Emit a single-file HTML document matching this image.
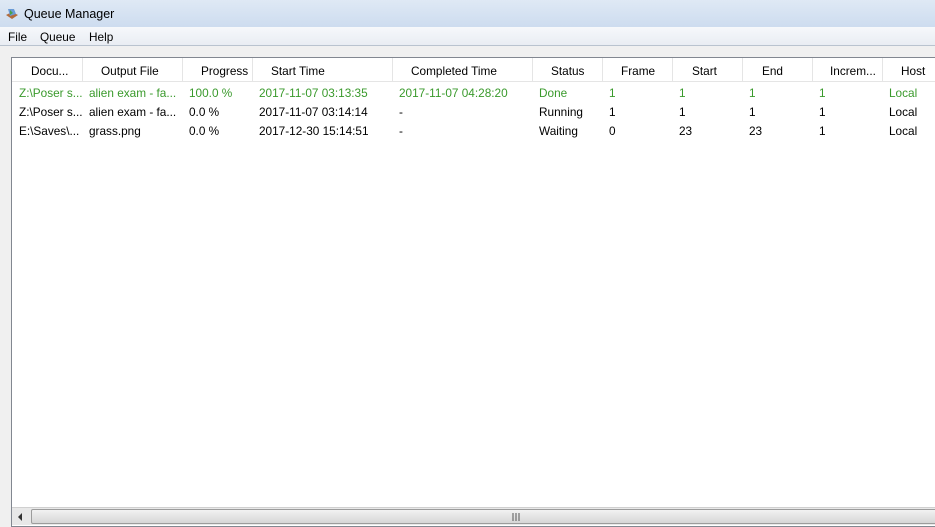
<!DOCTYPE html>
<html><head><style>
*{margin:0;padding:0;box-sizing:border-box}
body{width:935px;height:526px;overflow:hidden;background:#f0f0f0;font-family:"Liberation Sans",sans-serif;font-size:11.8px;color:#000;position:relative}
.t{position:absolute;white-space:nowrap}
#title{position:absolute;left:0;top:0;width:935px;height:27px;background:linear-gradient(#dfe9f5,#cddcef)}
#menu{position:absolute;left:0;top:27px;width:935px;height:19px;background:linear-gradient(#f6f8fb,#e9edf3);border-bottom:1px solid #b9c3cf}
#list{position:absolute;left:11px;top:57px;width:930px;height:470px;background:#fff;border:1px solid #828790}
#hdr{position:absolute;left:0;top:0;width:100%;height:24px;background:#fff;border-bottom:1px solid #e5e5e5}
.sep{position:absolute;top:0;width:1px;height:24px;background:#e5e5e5}
.g{color:#3a9a2c}
#sb{position:absolute;left:0;top:449px;width:100%;height:18px;background:#e8e8e8;border-top:1px solid #d0d0d0}
#thumb{position:absolute;left:19px;top:1px;width:920px;height:15px;background:linear-gradient(#f2f2f2,#d6d6d6);border:1px solid #9c9c9c;border-radius:2px}
</style></head><body>
<div id="title">
<svg style="position:absolute;left:4px;top:6px" width="16" height="16" viewBox="0 0 16 16"><path d="M2 9l6-3 6 3-6 4z" fill="#b46b3a"/><path d="M4 3h6l2 5-6 2z" fill="#6a9bd6"/><path d="M6 4l3 3-3 2z" fill="#49a34a"/></svg>
<span class="t" style="left:24px;top:7px;font-size:12.5px">Queue Manager</span></div>
<div id="menu"><span class="t" style="left:8px;top:3px">File</span><span class="t" style="left:40px;top:3px">Queue</span><span class="t" style="left:89px;top:3px">Help</span></div>
<div id="list">
<div id="hdr">
<div class="sep" style="left:70px"></div><div class="sep" style="left:170px"></div><div class="sep" style="left:240px"></div><div class="sep" style="left:380px"></div><div class="sep" style="left:520px"></div><div class="sep" style="left:590px"></div><div class="sep" style="left:660px"></div><div class="sep" style="left:730px"></div><div class="sep" style="left:800px"></div><div class="sep" style="left:870px"></div>
<span class="t" style="left:19px;top:6px">Docu...</span>
<span class="t" style="left:89px;top:6px">Output File</span>
<span class="t" style="left:189px;top:6px">Progress</span>
<span class="t" style="left:259px;top:6px">Start Time</span>
<span class="t" style="left:399px;top:6px">Completed Time</span>
<span class="t" style="left:539px;top:6px">Status</span>
<span class="t" style="left:609px;top:6px">Frame</span>
<span class="t" style="left:680px;top:6px">Start</span>
<span class="t" style="left:750px;top:6px">End</span>
<span class="t" style="left:818px;top:6px">Increm...</span>
<span class="t" style="left:889px;top:6px">Host</span>
</div>
<div class="g">
<span class="t" style="left:7px;top:28px">Z:\Poser s...</span><span class="t" style="left:77px;top:28px">alien exam - fa...</span><span class="t" style="left:177px;top:28px">100.0 %</span><span class="t" style="left:247px;top:28px">2017-11-07 03:13:35</span><span class="t" style="left:387px;top:28px">2017-11-07 04:28:20</span><span class="t" style="left:527px;top:28px">Done</span><span class="t" style="left:597px;top:28px">1</span><span class="t" style="left:667px;top:28px">1</span><span class="t" style="left:737px;top:28px">1</span><span class="t" style="left:807px;top:28px">1</span><span class="t" style="left:877px;top:28px">Local</span>
</div>
<span class="t" style="left:7px;top:47px">Z:\Poser s...</span><span class="t" style="left:77px;top:47px">alien exam - fa...</span><span class="t" style="left:177px;top:47px">0.0 %</span><span class="t" style="left:247px;top:47px">2017-11-07 03:14:14</span><span class="t" style="left:387px;top:47px">-</span><span class="t" style="left:527px;top:47px">Running</span><span class="t" style="left:597px;top:47px">1</span><span class="t" style="left:667px;top:47px">1</span><span class="t" style="left:737px;top:47px">1</span><span class="t" style="left:807px;top:47px">1</span><span class="t" style="left:877px;top:47px">Local</span>
<span class="t" style="left:7px;top:66px">E:\Saves\...</span><span class="t" style="left:77px;top:66px">grass.png</span><span class="t" style="left:177px;top:66px">0.0 %</span><span class="t" style="left:247px;top:66px">2017-12-30 15:14:51</span><span class="t" style="left:387px;top:66px">-</span><span class="t" style="left:527px;top:66px">Waiting</span><span class="t" style="left:597px;top:66px">0</span><span class="t" style="left:667px;top:66px">23</span><span class="t" style="left:737px;top:66px">23</span><span class="t" style="left:807px;top:66px">1</span><span class="t" style="left:877px;top:66px">Local</span>
<div id="sb">
<svg style="position:absolute;left:6px;top:5px" width="5" height="8"><path d="M4 0L0 4l4 4z" fill="#333"/></svg>
<div id="thumb"><svg style="position:absolute;left:480px;top:3px" width="8" height="8"><path d="M1 0v8M4 0v8M7 0v8" stroke="#555" stroke-width="1"/></svg></div>
</div>
</div>
</body></html>
